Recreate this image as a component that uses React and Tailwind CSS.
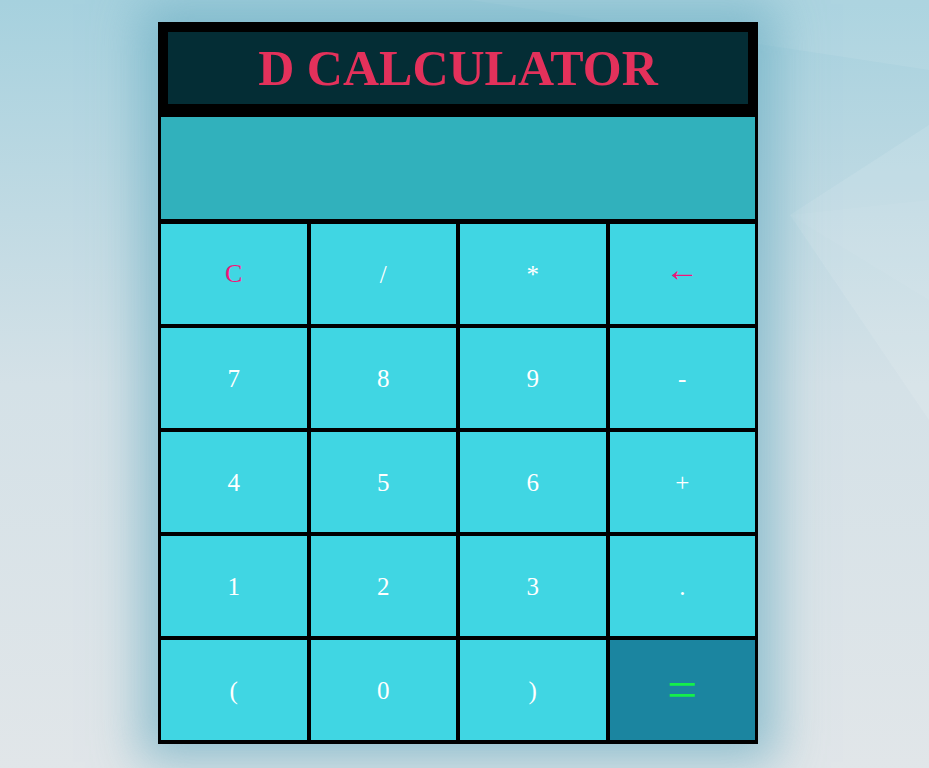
import { useState } from "react";

const keys = [
  { k: "C", color: "text-[#f0147a]", size: "text-[26px]" },
  { k: "/" },
  { k: "*" },
  { k: "←", color: "text-[#f0147a]", size: "inline-block text-[34px] -mt-[8px]" },
  { k: "7" },
  { k: "8" },
  { k: "9" },
  { k: "-" },
  { k: "4" },
  { k: "5" },
  { k: "6" },
  { k: "+" },
  { k: "1" },
  { k: "2" },
  { k: "3" },
  { k: "." },
  { k: "(" },
  { k: "0" },
  { k: ")" },
  { k: "=", color: "text-[#14f04a]", size: "text-[54px]", bg: "bg-[#1b85a0]" },
];

export default function App() {
  const [value, setValue] = useState("");

  const press = (k) => {
    if (k === "C") return setValue("");
    if (k === "←") return setValue((v) => v.slice(0, -1));
    if (k === "=") {
      try {
        setValue(String(Function("return (" + value + ")")()));
      } catch {
        setValue("Error");
      }
      return;
    }
    setValue((v) => v + k);
  };

  return (
    <div
      className="relative min-h-screen overflow-hidden bg-gradient-to-b from-[#a6d1de] via-[#d4e1e7] to-[#e1e6e9] pt-[22px] pl-[158px] pb-6"
      style={{ fontFamily: "'Liberation Serif', 'Times New Roman', serif" }}
    >
      <svg
        className="absolute inset-0 w-full h-full pointer-events-none"
        viewBox="0 0 929 768"
        preserveAspectRatio="none"
      >
        <polygon points="470,0 929,0 929,70" fill="#ffffff" opacity="0.08" />
        <polygon points="790,215 929,125 929,420" fill="#ffffff" opacity="0.1" />
        <polygon points="790,215 929,300 929,200" fill="#ffffff" opacity="0.05" />
      </svg>

      <div className="relative w-[600px] bg-black border-[3px] border-black shadow-[0_0_45px_18px_rgba(110,175,195,0.7)]">
        <div className="mx-[7px] mt-[7px] mb-[13px] h-[72px] bg-[#042d35] flex items-center justify-center">
          <h1 className="text-[50px] font-bold leading-none text-[#e3315b]">
            D CALCULATOR
          </h1>
        </div>

        <div className="h-[102px] bg-[#31b1bc] flex items-center justify-end px-4 text-white text-4xl">
          {value}
        </div>

        <div className="grid grid-cols-4 gap-[4px] pt-[5px] pb-[1px]">
          {keys.map((b) => (
            <button
              key={b.k}
              onClick={() => press(b.k)}
              className={`h-[100px] flex items-center justify-center leading-none ${b.bg || "bg-[#40d6e3]"} ${b.color || "text-white"}`}
            >
              <span className={b.size || "text-[25px]"}>{b.k}</span>
            </button>
          ))}
        </div>
      </div>
    </div>
  );
}
